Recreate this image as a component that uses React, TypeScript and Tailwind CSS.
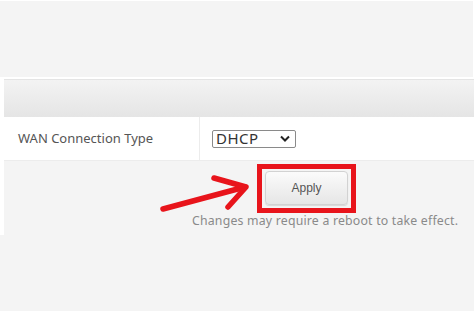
import React from "react";

export default function App() {
  return (
    <div className="relative w-[474px] h-[313px] bg-white overflow-hidden" style={{ fontFamily: '"Noto Sans", Arial, sans-serif' }}>
      {/* top blank panel */}
      <div className="h-[77px] bg-[#f4f4f4] border-t border-r border-white" />
      <div className="h-[2px] bg-white" />
      {/* table */}
      <div className="ml-[4px] flex flex-col">
        <div className="h-[38px] bg-gradient-to-b from-[#f3f3f3] to-[#e5e5e5] border-t border-[#e4e4e4]" />
        <div className="h-[44px] bg-white flex border-b border-[#ececec]">
          <div className="w-[196px] flex items-center pl-[14px] border-r border-[#ececec] text-[13px] text-[#555]">
            WAN Connection Type
          </div>
          <div className="flex items-center pl-[12px]">
            <div className="w-[84px] h-[18px] border border-[#8a8a8a] rounded-[2px] flex items-center justify-between pl-[3px] pr-[5px] text-[15px] text-[#333] leading-none">
              <span className="tracking-[0.5px]">DHCP</span>
              <svg width="10" height="7" viewBox="0 0 10 7">
                <path d="M1 1.5 L5 5.5 L9 1.5" stroke="#222" strokeWidth="2" fill="none" />
              </svg>
            </div>
          </div>
        </div>
        <div className="h-[74px] bg-[#f4f4f4] flex flex-col items-start pl-[188px]">
          <div className="mt-[3px] ml-[65px] border-[5px] border-[#e8141b] p-[3px] pt-[2px]">
            <div className="w-[83px] h-[34px] rounded-[4px] border border-[#d2d2d2] bg-gradient-to-b from-[#fbfbfb] to-[#e6e6e6] shadow-[0_1px_1px_rgba(0,0,0,0.12)] flex items-center justify-center text-[12px] text-[#555]" style={{ fontFamily: '"Liberation Sans", Arial, sans-serif' }}>
              Apply
            </div>
          </div>
          <div className="mt-[2px] text-[12.3px] text-[#8a8a8a] tracking-[0.2px] whitespace-nowrap leading-none">
            Changes may require a reboot to take effect.
          </div>
        </div>
      </div>
      <div className="h-[78px] bg-[#f4f4f4] border-b-2 border-white" />
      {/* arrow annotation */}
      <svg className="absolute left-0 top-0 pointer-events-none" width="474" height="313">
        <g stroke="#e8141b" strokeWidth="5.5" strokeLinecap="round" strokeLinejoin="round" fill="none">
          <path d="M163 209 L245 187" />
          <path d="M214 178 L246 187 L228 207" />
        </g>
      </svg>
    </div>
  );
}
